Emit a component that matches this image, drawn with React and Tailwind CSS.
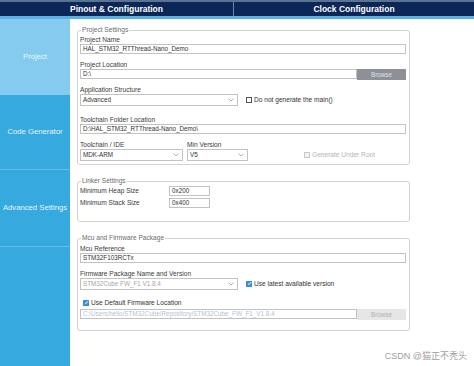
import React from "react";

function Chevron() {
  return (
    <svg width="6" height="4" viewBox="0 0 6 4" className="shrink-0">
      <path d="M0.6 0.6 L3 3 L5.4 0.6" fill="none" stroke="#8c8c8c" strokeWidth="0.7" />
    </svg>
  );
}

function Label({ children }) {
  return <div className="h-[9px] leading-[9px] text-[6.6px] text-[#3a3a3a]">{children}</div>;
}

function Input({ value, className = "", muted }) {
  return (
    <div
      className={`h-[10px] border border-[#c2c2c2] bg-white pl-[2px] text-[6.3px] leading-[8px] whitespace-nowrap overflow-hidden ${
        muted ? "text-[#b3bfd6]" : "text-[#333]"
      } ${className}`}
    >
      {value}
    </div>
  );
}

function Select({ value, className = "", muted }) {
  return (
    <div
      className={`h-[12px] border border-[#c2c2c2] bg-white pl-[2px] pr-[3px] flex items-center justify-between text-[6.3px] ${
        muted ? "text-[#a5a5a5]" : "text-[#333]"
      } ${className}`}
    >
      <span>{value}</span>
      <Chevron />
    </div>
  );
}

function Check({ checked, disabled, label }) {
  return (
    <div className="flex items-center gap-[2px] text-[6.6px]">
      {checked ? (
        <span className="w-[6px] h-[6px] bg-[#3c8fd6] flex items-center justify-center">
          <svg width="5" height="5" viewBox="0 0 5 5">
            <path d="M1 2.6 L2.1 3.6 L4 1.2" fill="none" stroke="white" strokeWidth="0.9" />
          </svg>
        </span>
      ) : (
        <span
          className={`w-[6px] h-[6px] border ${
            disabled ? "border-[#c8c8c8] bg-[#f2f2f2]" : "border-[#555] bg-white"
          }`}
        />
      )}
      <span className={disabled ? "text-[#b5b5b5]" : "text-[#333]"}>{label}</span>
    </div>
  );
}

function Box({ title, children, className = "" }) {
  return (
    <fieldset className={`w-[333px] border border-[#d2d2d2] rounded-[3px] pl-[2px] pr-[3px] ${className}`}>
      <legend className="ml-[1px] px-[1px] h-[8px] leading-[8px] text-[6.6px] text-[#6b6b6b]">{title}</legend>
      {children}
    </fieldset>
  );
}

export default function App() {
  return (
    <div className="relative w-[474px] h-[366px] overflow-hidden bg-white flex flex-col font-['Liberation_Sans','Noto_Sans_CJK_SC',sans-serif]">
      {/* top tabs */}
      <div className="h-[16px] bg-[#0c2657] border-t-[2px] border-[#5a7391] flex text-white font-bold text-[8.5px]">
        <div className="w-[234px] flex items-center justify-center border-r border-[#6f86a6]">Pinout &amp; Configuration</div>
        <div className="flex-1 flex items-center justify-center">Clock Configuration</div>
      </div>
      <div className="h-[3px] bg-[#5ab1e4]" />

      <div className="flex flex-1">
        {/* sidebar */}
        <div className="w-[70px] bg-[#36a9df] flex flex-col text-[7.7px]">
          <div className="h-[76px] bg-[#84cbef] flex items-center justify-center text-[#eaf6fd]">Project</div>
          <div className="h-[75px] border-b border-[#63bde9] flex items-center justify-center text-[#e8f5fd]">Code Generator</div>
          <div className="h-[77px] border-b border-[#63bde9] flex items-center justify-center text-[#e8f5fd] whitespace-nowrap">Advanced Settings</div>
        </div>

        {/* content */}
        <div className="flex-1 pl-[7px] pt-[7px] flex flex-col">
          <Box title="Project Settings" className="pt-[1px] pb-[3px]">
            <Label>Project Name</Label>
            <Input value="HAL_STM32_RTThread-Nano_Demo" />
            <div className="mt-[6px]">
              <Label>Project Location</Label>
              <div className="flex">
                <Input value="D:\" className="flex-1" />
                <div className="w-[49px] h-[11px] bg-[#8d9197] text-[#dfe3e8] text-[6.3px] flex items-center justify-center">Browse</div>
              </div>
            </div>
            <div className="mt-[5px]">
              <Label>Application Structure</Label>
              <div className="flex items-center gap-[8px]">
                <Select value="Advanced" className="w-[158px]" />
                <Check label="Do not generate the main()" />
              </div>
            </div>
            <div className="mt-[9px]">
              <Label>Toolchain Folder Location</Label>
              <Input value="D:\HAL_STM32_RTThread-Nano_Demo\" />
            </div>
            <div className="mt-[6px] flex items-end">
              <div className="w-[103px]">
                <Label>Toolchain / IDE</Label>
                <Select value="MDK-ARM" />
              </div>
              <div className="w-[61px] ml-[4px]">
                <Label>Min Version</Label>
                <Select value="V5" />
              </div>
              <div className="ml-[56px] h-[12px] flex items-center">
                <Check disabled label="Generate Under Root" />
              </div>
            </div>
          </Box>

          <Box title="Linker Settings" className="mt-[12px] pt-[1px] pb-[13px]">
            <div className="flex items-center">
              <div className="w-[89px] text-[6.6px] text-[#3a3a3a]">Minimum Heap Size</div>
              <Input value="0x200" className="w-[41px]" />
            </div>
            <div className="flex items-center mt-[2px]">
              <div className="w-[89px] text-[6.6px] text-[#3a3a3a]">Minimum Stack Size</div>
              <Input value="0x400" className="w-[41px]" />
            </div>
          </Box>

          <Box title="Mcu and Firmware Package" className="mt-[12px] pt-[2px] pb-[10px]">
            <Label>Mcu Reference</Label>
            <Input value="STM32F103RCTx" />
            <div className="mt-[6px]">
              <Label>Firmware Package Name and Version</Label>
              <div className="flex items-center gap-[8px]">
                <Select muted value="STM32Cube FW_F1 V1.8.4" className="w-[158px]" />
                <Check checked label="Use latest available version" />
              </div>
            </div>
            <div className="h-[10px] mt-[8px] pl-[3px] flex items-center">
              <Check checked label="Use Default Firmware Location" />
            </div>
            <div className="flex mt-[1px]">
              <Input muted value="C:/Users/hello/STM32Cube/Repository/STM32Cube_FW_F1_V1.8.4" className="flex-1" />
              <div className="w-[49px] h-[11px] bg-[#e6e6e6] text-[#b0b0b0] text-[6.3px] flex items-center justify-center">Browse</div>
            </div>
          </Box>
        </div>
      </div>

      <div className="absolute right-[7px] bottom-[3px] text-[9px] text-[#a0a0a0]">CSDN @猫正不秃头</div>
    </div>
  );
}
